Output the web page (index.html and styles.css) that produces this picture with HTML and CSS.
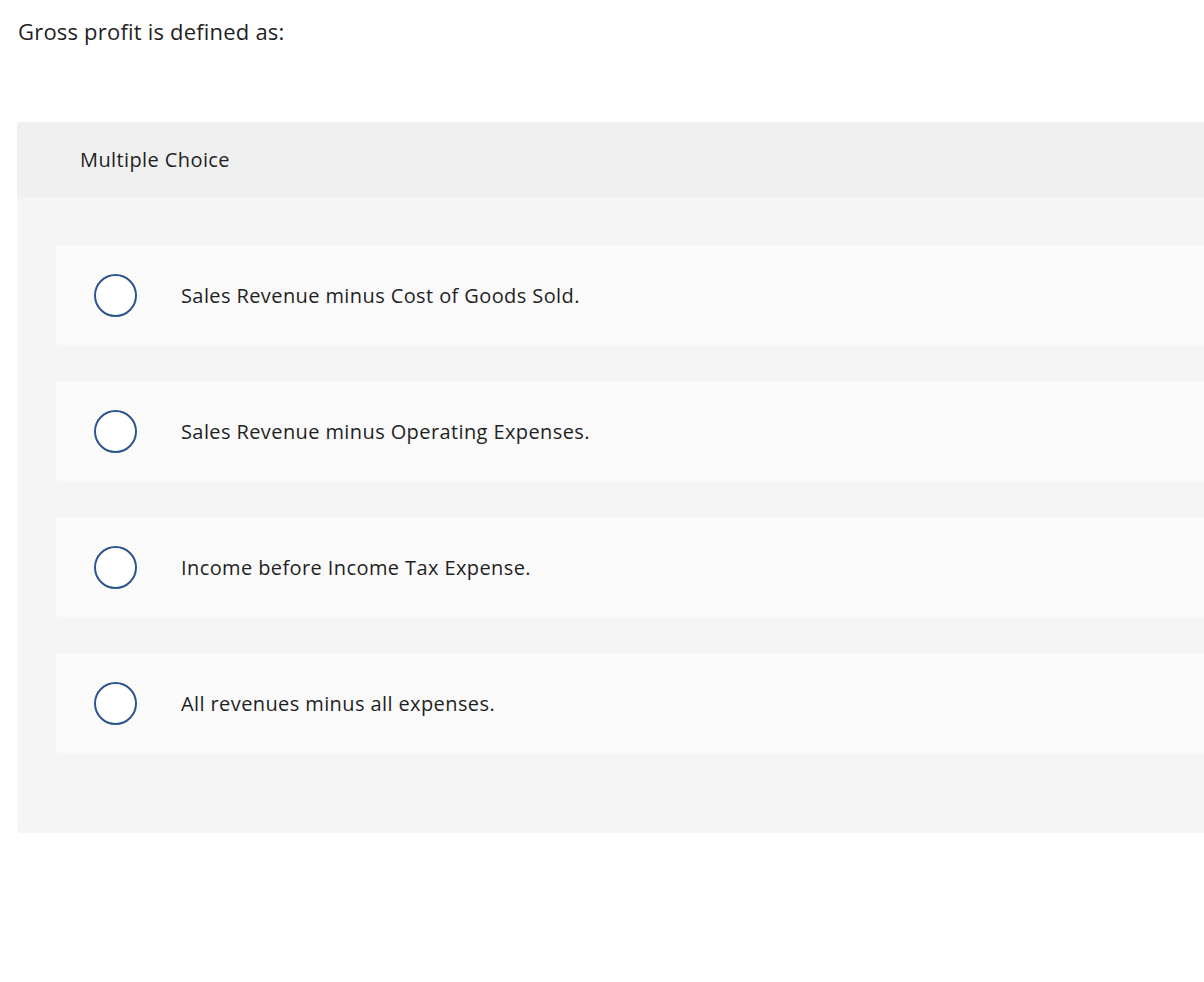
FILE: index.html
```html
<!DOCTYPE html>
<html>
<head>
<meta charset="utf-8">
<link rel="stylesheet" href="styles.css">
</head>
<body>
<div class="question">Gross profit is defined as:</div>
<div class="mc">
  <div class="mc-header">Multiple Choice</div>
  <div class="mc-body">
    <div class="option"><span class="radio"></span><span class="label">Sales Revenue minus Cost of Goods Sold.</span></div>
    <div class="option"><span class="radio"></span><span class="label">Sales Revenue minus Operating Expenses.</span></div>
    <div class="option"><span class="radio"></span><span class="label">Income before Income Tax Expense.</span></div>
    <div class="option"><span class="radio"></span><span class="label">All revenues minus all expenses.</span></div>
  </div>
</div>
</body>
</html>
```
FILE: styles.css
```css
html, body {
  margin: 0;
  padding: 0;
  background: #ffffff;
  overflow: hidden;
}
body {
  font-family: "Open Sans", "Liberation Sans", sans-serif;
  color: #1f1f1f;
}
.question {
  font-size: 22px;
  letter-spacing: 0.2px;
  line-height: 30px;
  padding: 16px 0 0 18px;
  height: 122px;
  box-sizing: border-box;
}
.mc {
  margin-left: 17px;
  border-radius: 4px 0 0 4px;
  overflow: hidden;
  background: #f5f5f5;
}
.mc-header {
  background: #f0f0f0;
  height: 75px;
  display: flex;
  align-items: center;
  padding-left: 63px;
  font-size: 20px;
  letter-spacing: 0.4px;
}
.mc-body {
  padding: 48px 0 80px 39px;
  display: flex;
  flex-direction: column;
  gap: 36px;
}
.option {
  height: 100px;
  background: #fafafa;
  border-radius: 4px 0 0 4px;
  display: flex;
  align-items: center;
  padding-left: 38px;
}
.radio {
  width: 39px;
  height: 39px;
  border: 2px solid #2c5590;
  border-radius: 50%;
  background: #fff;
  flex: none;
}
.label {
  margin-left: 44px;
  font-size: 20px;
  letter-spacing: 0.4px;
}
```
